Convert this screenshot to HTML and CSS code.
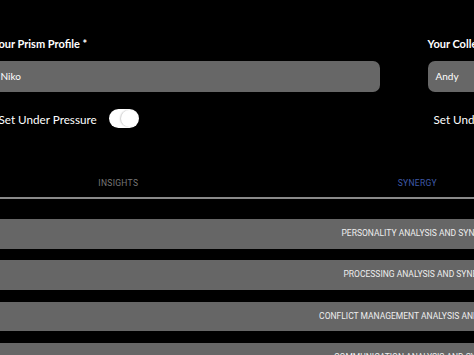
FILE: index.html
```html
<!DOCTYPE html>
<html>
<head>
<meta charset="utf-8">
<link rel="stylesheet" href="styles.css">
</head>
<body>
<div class="page">
  <div class="profiles">
    <div class="col">
      <div class="label">Your Prism Profile *</div>
      <div class="input">Niko</div>
      <div class="switch-row">
        <span class="switch-text">Set Under Pressure</span>
        <span class="switch"><span class="knob"></span></span>
      </div>
    </div>
    <div class="col">
      <div class="label">Your Colleague's Prism Profile *</div>
      <div class="input">Andy</div>
      <div class="switch-row">
        <span class="switch-text">Set Under Pressure</span>
        <span class="switch"><span class="knob"></span></span>
      </div>
    </div>
  </div>
  <div class="tabs">
    <div class="tab">INSIGHTS</div>
    <div class="tab active">SYNERGY</div>
  </div>
  <div class="divider"></div>
  <div class="rows">
    <div class="row">PERSONALITY ANALYSIS AND SYNERGY</div>
    <div class="row">PROCESSING ANALYSIS AND SYNERGY</div>
    <div class="row">CONFLICT MANAGEMENT ANALYSIS AND SYNERGY</div>
    <div class="row">COMMUNICATION ANALYSIS AND SYNERGY</div>
  </div>
</div>
</body>
</html>
```

FILE: styles.css
```css
html, body {
  margin: 0;
  padding: 0;
  background: #000;
  overflow: hidden;
  height: 355px;
}
.page {
  width: 1000px;
  margin-left: -7.5px;
  padding-top: 36px;
}
.profiles {
  display: flex;
  gap: 48px;
}
.col {
  width: 387px;
  flex: none;
}
.label {
  font-family: Lato, sans-serif;
  font-weight: 700;
  font-size: 11px;
  line-height: 16px;
  color: #fff;
  margin-bottom: 9px;
  white-space: nowrap;
}
.input {
  height: 31px;
  background: #676767;
  border-radius: 7px;
  padding-left: 8px;
  font-family: Lato, sans-serif;
  font-size: 10px;
  line-height: 31px;
  color: #fff;
}
.switch-row {
  display: flex;
  align-items: center;
  margin-top: 17px;
  padding-left: 6px;
  height: 19px;
}
.switch-text {
  font-family: Lato, sans-serif;
  font-size: 11.7px;
  color: #fff;
  white-space: nowrap;
}
.switch {
  margin-left: 12px;
  width: 30px;
  height: 19px;
  border-radius: 10px;
  background: #fff;
  position: relative;
  flex: none;
}
.knob {
  position: absolute;
  right: 1px;
  top: 1px;
  width: 17px;
  height: 17px;
  border-radius: 50%;
  background: #fff;
  box-shadow: -1px 0 1.5px rgba(0,0,0,0.2);
}
.tabs {
  display: flex;
  margin-top: 32px;
  margin-left: -23.7px;
  height: 37px;
}
.tab {
  width: 299px;
  text-align: center;
  font-family: Roboto, sans-serif;
  font-size: 8.5px;
  letter-spacing: 0.3px;
  padding-top: 10px;
  line-height: 27px;
  color: #777;
}
.tab.active {
  color: #3f5aa8;
}
.divider {
  height: 1.5px;
  background: #8a8a8a;
  margin-left: 7.5px;
}
.rows {
  margin-top: 20.5px;
  display: flex;
  flex-direction: column;
  gap: 11.8px;
}
.row {
  width: 852px;
  height: 29.5px;
  background: #666;
  text-align: center;
  font-family: Roboto, sans-serif;
  font-size: 8.5px;
  line-height: 29.5px;
  color: #eee;
  white-space: nowrap;
}
```
